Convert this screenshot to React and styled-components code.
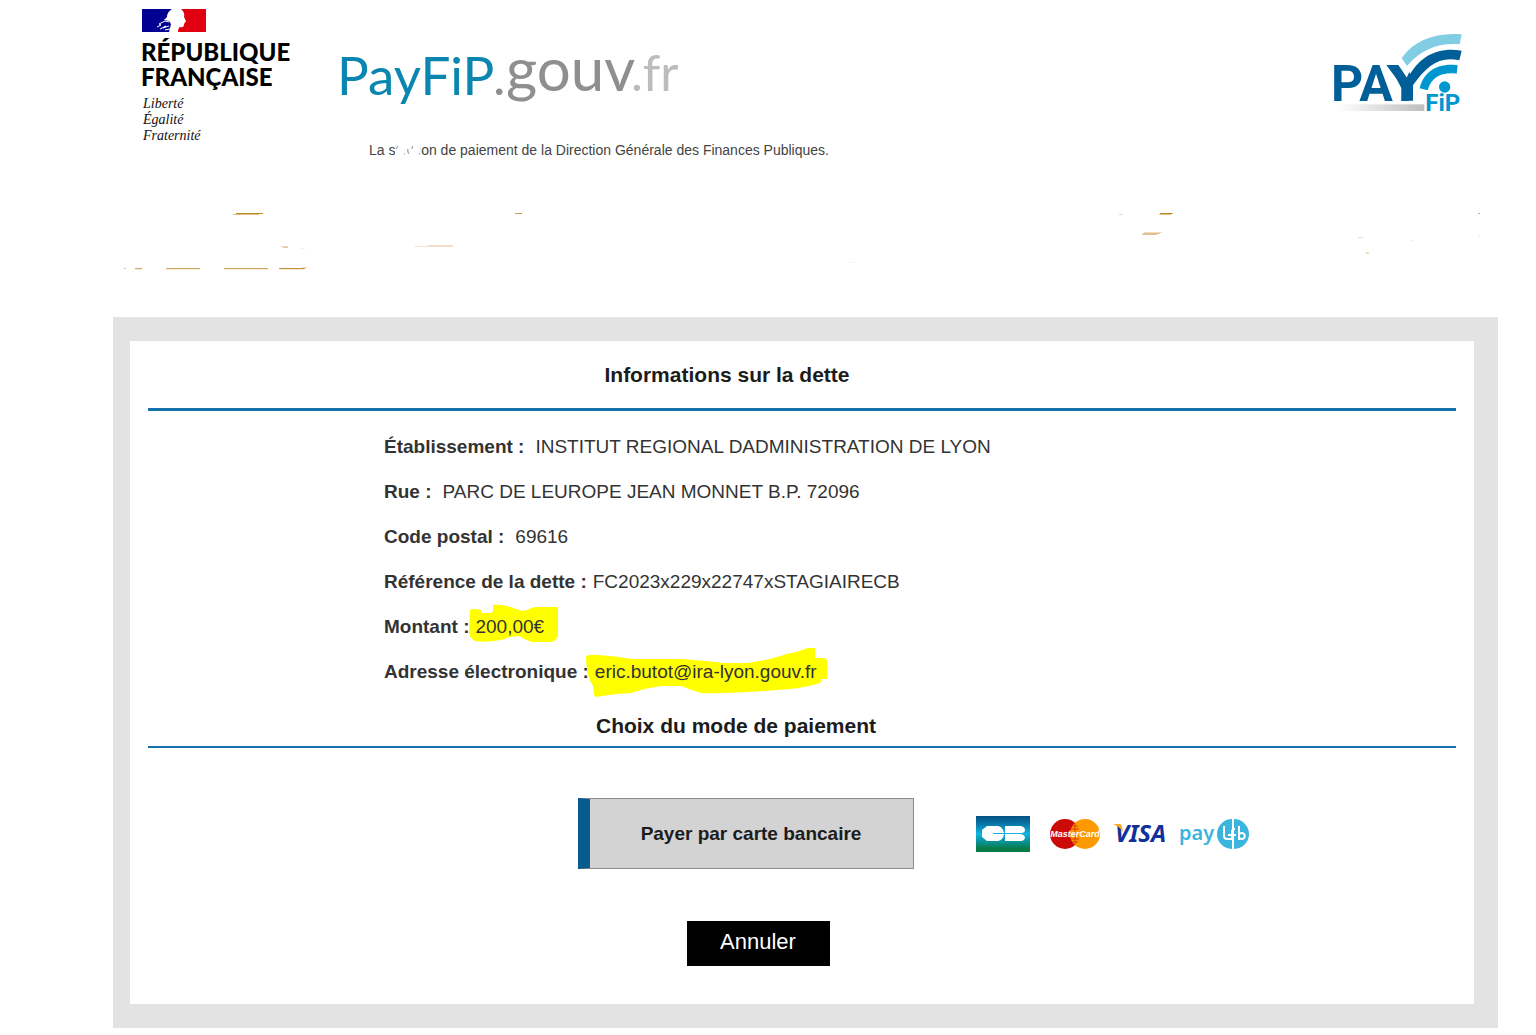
import React from "react";
import styled, { createGlobalStyle } from "styled-components";

const colors = {
  text: "#333",
  heading: "#1c1c1c",
  frame: "#e3e3e3",
  rule: "#1670ab",
  accent: "#075b8f",
  button: "#d3d3d3",
  marker: "#ffff00",
  payfip: "#0a86b0",
};

const details = [
  { label: "Établissement :", value: "INSTITUT REGIONAL DADMINISTRATION DE LYON", spaced: true },
  { label: "Rue :", value: "PARC DE LEUROPE JEAN MONNET B.P. 72096", spaced: true },
  { label: "Code postal :", value: "69616", spaced: true },
  { label: "Référence de la dette :", value: "FC2023x229x22747xSTAGIAIRECB" },
  { label: "Montant :", value: "200,00€", marker: "amount" },
  { label: "Adresse électronique :", value: "eric.butot@ira-lyon.gouv.fr", marker: "email" },
];

// outlines of the highlighter strokes, drawn behind the value
const markers = {
  amount: {
    left: -6,
    top: 0,
    width: 90,
    height: 38,
    path: "M1 6Q4 4 12 6V9H22L24 7V1Q36 0 47 5Q53 8 58 6Q62 4 66 3H89V32Q87 37 82 38H63Q56 36 50 32Q42 32 36 35Q20 39 6 37Q0 34 0 28Z",
  },
  email: {
    left: -9,
    top: -1,
    width: 242,
    height: 49,
    path: "M0 8Q5 6 12 7Q30 8 45 11H95Q120 13 138 15H160Q185 12 200 6Q212 4 222 0H229V10H238L241 12V31H236L234 35Q215 41 190 42Q150 46 115 45Q105 42 95 38H75Q60 40 45 45Q25 46 10 49L8 47L7 38Q0 28 0 8Z",
  },
};

// left, top, width, height, colour
const traces = [
  [236, 213, 27, 1, "#bd8a2a"],
  [233, 214, 26, 1, "#e0bd85"],
  [515, 213, 7, 1, "#c69b4c"],
  [281, 246, 7, 1, "#eed8bf"],
  [283, 247, 5, 1, "#e6c8a4"],
  [301, 248, 4, 1, "#f8efe6"],
  [415, 246, 14, 1, "#f3e2d2"],
  [428, 245, 25, 1, "#efdac4"],
  [428, 246, 25, 1, "#f3e2d2"],
  [124, 268, 2, 1, "#dcc08a"],
  [135, 268, 7, 1, "#d2ab63"],
  [135, 269, 7, 1, "#f6ead8"],
  [166, 268, 34, 1, "#d2ab63"],
  [166, 269, 34, 1, "#f6ead8"],
  [224, 268, 44, 1, "#d2ab63"],
  [224, 269, 44, 1, "#f6ead8"],
  [279, 268, 26, 1, "#c3923a"],
  [280, 269, 24, 1, "#f6ead8"],
  [302, 267, 5, 1, "#eed8bf"],
  [1119, 214, 4, 1, "#f0dcc6"],
  [1160, 213, 13, 1, "#bd8a2a"],
  [1159, 214, 12, 1, "#e0bd85"],
  [1144, 232, 18, 1, "#f0dcc0"],
  [1143, 233, 17, 1, "#e4c08f"],
  [1142, 234, 15, 1, "#e4c08f"],
  [1358, 237, 5, 1, "#f0dcc6"],
  [1366, 252, 3, 2, "#f0dcc6"],
  [1411, 240, 2, 1, "#f6e8da"],
  [1478, 213, 2, 1, "#d9ad77"],
  [1478, 235, 2, 1, "#f6e8da"],
  [850, 262, 6, 1, "#fbf4ee"],
];

const RepubliqueLogo = () => (
  <svg width="152" height="136" viewBox="0 0 152 136" role="img" aria-label="République Française">
    <path d="M0 0H30Q25 3 25 8L22 11L27 12L29 15L27 23H0Z" fill="#000091" />
    <path d="M39 0H64V23H36Q36 19 38 18Q42 19 42 15L44 12L42 8Q43 3 39 0Z" fill="#e1000f" />
    <path d="M15 18L19 16L17 15L23 12L27 13M18 20L24 17L21 19L27 17M23 21L28 20" stroke="#fff" strokeWidth="1" fill="none" />
    <LogoName x="-1" y="52">RÉPUBLIQUE</LogoName>
    <LogoName x="-1" y="77">FRANÇAISE</LogoName>
    <LogoMotto x="1" y="99">Liberté</LogoMotto>
    <LogoMotto x="1" y="115">Égalité</LogoMotto>
    <LogoMotto x="1" y="131">Fraternité</LogoMotto>
  </svg>
);

const Wordmark = () => (
  <svg width="344" height="84" viewBox="0 -10 344 84" role="img" aria-label="PayFiP.gouv.fr">
    <WordmarkText x="-5" y="54" size="53" fill={colors.payfip}>PayFiP</WordmarkText>
    <WordmarkText x="151" y="54" size="53" fill="#8f8f8f">.</WordmarkText>
    <WordmarkText x="164" y="50" size="60" fill="#8f8f8f">gouv</WordmarkText>
    <WordmarkText x="289" y="50" size="50" fill="#bcbcbc">.fr</WordmarkText>
  </svg>
);

const PayFipLogo = () => (
  <svg width="130" height="82" viewBox="69 36 390 246" role="img" aria-label="PayFiP">
    <defs>
      <linearGradient id="shade">
        <stop offset="0" stopColor="#fff" />
        <stop offset="1" stopColor="#bdbdbd" />
      </linearGradient>
    </defs>
    <rect x="80" y="253" width="260" height="20" fill="url(#shade)" />
    <PayText x="60" y="242">PAY</PayText>
    <path d="M288 138L316 100L372 100L330 200L308 190Z" fill="#fff" />
    <path d="M272 114C310 60 375 36 452 43L446 73C385 67 330 88 288 138Z" fill="#80cde4" />
    <path d="M226 135H262L290 176C325 105 385 80 452 92L445 121C385 107 345 140 306 196V242H274V200Z" fill="#005f98" />
    <path d="M326 205C338 155 380 128 440 136L437 161C392 156 362 170 350 211Z" fill="#0096cf" />
    <circle cx="401" cy="201" r="17" fill="#0096cf" />
    <FipText x="343" y="273">FiP</FipText>
  </svg>
);

const CbLogo = () => (
  <svg width="54" height="36" viewBox="0 0 54 36" role="img" aria-label="CB">
    <defs>
      <linearGradient id="cb" x1="0" y1="0" x2="0" y2="1">
        <stop offset="0" stopColor="#074f82" />
        <stop offset="0.25" stopColor="#087dad" />
        <stop offset="0.5" stopColor="#13b5df" />
        <stop offset="0.68" stopColor="#0b96a7" />
        <stop offset="0.9" stopColor="#087c48" />
        <stop offset="1" stopColor="#08794a" />
      </linearGradient>
    </defs>
    <rect width="54" height="36" fill="url(#cb)" />
    <path d="M11 10H22Q27 11 28 17H17V18H28Q27 24 22 25H11L6 21V14Z" fill="#fff" />
    <path d="M29 10H45Q49 11 49 14Q49 17 45 17H29ZM29 18H45Q49 19 49 22Q48 25 45 25H29Z" fill="#fff" />
  </svg>
);

const MastercardLogo = () => (
  <svg width="52" height="32" viewBox="0 0 52 32" role="img" aria-label="MasterCard">
    <circle cx="16" cy="16" r="15" fill="#cc0a0a" />
    <circle cx="36" cy="16" r="15" fill="#fd9a02" />
    <path d="M26 5V27M23 8H29M22 11H30M22 21H30M23 24H29" stroke="#db3d05" strokeWidth="1" />
    <CardText x="26" y="19">MasterCard</CardText>
  </svg>
);

const VisaLogo = () => (
  <svg width="55" height="30" viewBox="0 -5 55 30" role="img" aria-label="VISA">
    <VisaText x="2" y="18">VISA</VisaText>
    <path d="M0 0H7Q9 1 9 3L10 8Q6 2 0 0Z" fill="#f7a823" />
  </svg>
);

const PaylibLogo = () => (
  <svg width="68" height="34" viewBox="0 0 68 34" role="img" aria-label="paylib">
    <PaylibText x="-1" y="23">pay</PaylibText>
    <path d="M52 2A15 15 0 0 0 52 32ZM54 2A15 15 0 0 1 54 32Z" fill="#3bb5de" />
    <path
      d="M44 9V19Q44 22 47 22H52V15Q52 12 55 12M48 18H56M59 9V23M59 18A3 3 0 1 1 59 20"
      stroke="#fff"
      strokeWidth="2"
      fill="none"
    />
  </svg>
);

const Traces = () => (
  <TraceStrip viewBox="113 200 1385 117" aria-hidden="true">
    {traces.map(([x, y, width, height, fill]) => (
      <rect key={`${x}-${y}`} x={x} y={y} width={width} height={height} fill={fill} />
    ))}
  </TraceStrip>
);

const Marker = ({ kind }) => {
  const { left, top, width, height, path } = markers[kind];
  return (
    <MarkerShape $left={left} $top={top} width={width} height={height} viewBox={`0 0 ${width} ${height}`} aria-hidden="true">
      <path d={path} fill={colors.marker} />
    </MarkerShape>
  );
};

export default function App() {
  return (
    <>
      <GlobalStyle />
      <Page>
        <Header>
          <RepubliqueLogo />
          <Brand>
            <Wordmark />
            <Tagline>
              La s
              <Erased>
                oluti
                <EraserShape viewBox="0 0 26 16" aria-hidden="true">
                  <path d="M0 0H26V16H0Z" fill="#fff" />
                  <path d="M1 7L3 4M9 12H10M13 7V10L14 12M17 7L18 4M24 12H25" stroke="#888" strokeWidth="1" fill="none" />
                </EraserShape>
              </Erased>
              on de paiement de la Direction Générale des Finances Publiques.
            </Tagline>
          </Brand>
          <PayFipLogo />
        </Header>
        <Traces />
        <Frame>
          <Panel>
            <Title>Informations sur la dette</Title>
            <Details>
              {details.map(({ label, value, spaced, marker }) => (
                <Detail key={label}>
                  <Label $spaced={spaced}>{label}</Label>
                  <Value>
                    {marker && <Marker kind={marker} />}
                    {value}
                  </Value>
                </Detail>
              ))}
            </Details>
            <PaymentTitle>Choix du mode de paiement</PaymentTitle>
            <Payment>
              <PayButton type="button">Payer par carte bancaire</PayButton>
              <Cards>
                <CbLogo />
                <MastercardLogo />
                <VisaLogo />
                <PaylibLogo />
              </Cards>
            </Payment>
            <Actions>
              <CancelButton type="button">Annuler</CancelButton>
            </Actions>
          </Panel>
        </Frame>
      </Page>
    </>
  );
}

const GlobalStyle = createGlobalStyle`
  * {
    box-sizing: border-box;
  }

  body {
    margin: 0;
    background: #fff;
    color: ${colors.text};
    font-family: "Liberation Sans", Arial, sans-serif;
  }

  svg {
    display: block;
    flex: none;
    overflow: visible;
  }
`;

const Page = styled.main`
  padding: 9px 38px 7px 113px;
`;

const Header = styled.header`
  display: flex;
  align-items: flex-start;
  padding: 0 34px 0 29px;
  height: 191px;

  > svg:last-child {
    margin-top: 23px;
  }
`;

const Brand = styled.div`
  flex: 1;
  margin-left: 48px;
  padding-top: 22px;
`;

const Tagline = styled.p`
  margin: 27px 0 0 27px;
  font-size: 14px;
  line-height: 16px;
  color: #444;
`;

const Erased = styled.span`
  position: relative;
`;

const EraserShape = styled.svg`
  position: absolute;
  left: 0;
  top: 0;
  width: 100%;
  height: 16px;
`;

const LogoName = styled.text`
  font-family: Lato, sans-serif;
  font-size: 24px;
  font-weight: 900;
  fill: #000;
`;

const LogoMotto = styled.text`
  font-family: "Liberation Serif", serif;
  font-size: 14px;
  font-style: italic;
  fill: #111;
`;

const WordmarkText = styled.text`
  font-family: Lato, sans-serif;
  font-size: ${({ size }) => size}px;
  font-weight: 400;
`;

const PayText = styled.text`
  font-family: Roboto, sans-serif;
  font-size: 150px;
  font-weight: 700;
  fill: #005f98;
`;

const FipText = styled.text`
  font-family: Roboto, sans-serif;
  font-size: 72px;
  font-weight: 700;
  fill: #0096cf;
`;

const CardText = styled.text`
  font-family: "Liberation Sans", sans-serif;
  font-size: 9px;
  font-weight: 700;
  font-style: italic;
  text-anchor: middle;
  fill: #fff;
`;

const VisaText = styled.text`
  font-family: "Noto Sans", sans-serif;
  font-size: 24px;
  font-weight: 700;
  font-style: italic;
  fill: #10309b;
`;

const PaylibText = styled.text`
  font-family: "Noto Sans", sans-serif;
  font-size: 20px;
  font-weight: 600;
  fill: #3bb5de;
`;

const TraceStrip = styled.svg`
  width: 100%;
`;

const Frame = styled.div`
  padding: 24px;
  padding-inline: 17px 24px;
  background: ${colors.frame};
`;

const Panel = styled.section`
  padding: 22px 18px 38px;
  background: #fff;
`;

const Title = styled.h2`
  margin: 0;
  padding: 0 150px 21px 0;
  border-bottom: 3px solid ${colors.rule};
  font-size: 21px;
  line-height: 24px;
  text-align: center;
  color: ${colors.heading};
`;

const PaymentTitle = styled(Title)`
  padding: 20px 132px 8px 0;
  border-bottom-width: 2px;
`;

const Details = styled.dl`
  margin: 0;
  padding: 13px 0 0 236px;
`;

const Detail = styled.div`
  display: flex;
  font-size: 19px;
  line-height: 45px;
`;

const Label = styled.dt`
  margin-right: ${({ $spaced }) => ($spaced ? 11 : 6)}px;
  font-weight: 700;
`;

const Value = styled.dd`
  position: relative;
  z-index: 0;
  margin: 0;
`;

const MarkerShape = styled.svg`
  position: absolute;
  left: ${({ $left }) => $left}px;
  top: ${({ $top }) => $top}px;
  z-index: -1;
`;

const Payment = styled.div`
  display: flex;
  align-items: center;
  justify-content: center;
  gap: 62px;
  padding: 50px 0 0 221px;
`;

const PayButton = styled.button`
  width: 336px;
  height: 71px;
  border: 1px solid #8c8c8c;
  border-left: 12px solid ${colors.accent};
  background: ${colors.button};
  color: ${colors.heading};
  font: 700 19px "Liberation Sans", Arial, sans-serif;
`;

const Cards = styled.div`
  display: flex;
  align-items: center;
  gap: 12px;

  > svg:first-child {
    margin-right: 7px;
  }
`;

const Actions = styled.div`
  display: flex;
  justify-content: center;
  padding: 52px 88px 0 0;
`;

const CancelButton = styled.button`
  width: 143px;
  height: 45px;
  padding: 0 0 3px;
  border: 0;
  background: #000;
  color: #fff;
  font: 400 22px "Liberation Sans", Arial, sans-serif;
`;
